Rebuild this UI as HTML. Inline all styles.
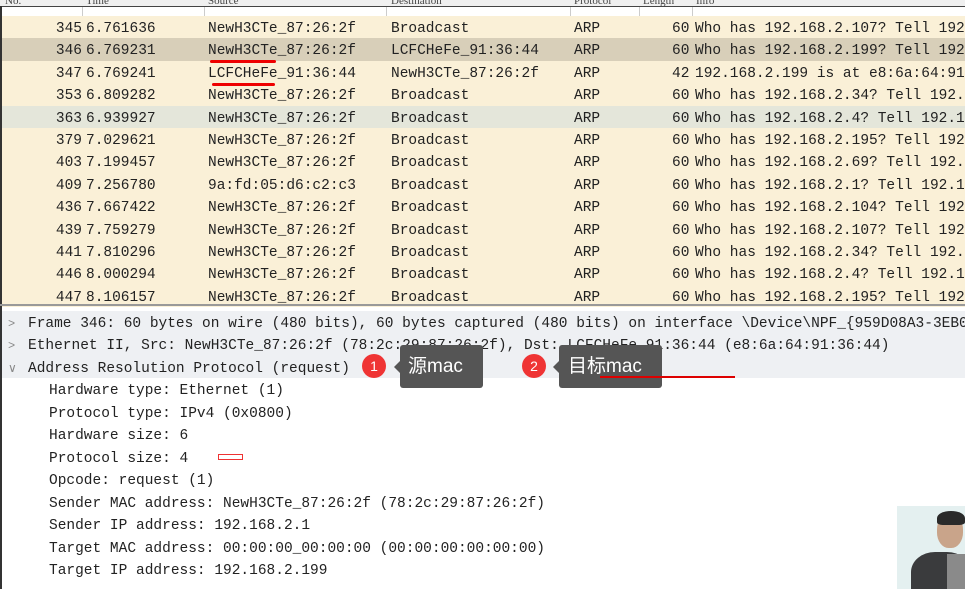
<!DOCTYPE html>
<html><head><meta charset="utf-8"><style>
body{margin:0;width:965px;height:589px;overflow:hidden;background:#fff;position:relative;font-family:"Liberation Mono",monospace;font-size:14.5px;color:#222}
.a{position:absolute;white-space:pre}
.row{position:absolute;left:2px;width:963px;height:22.4px;background:#faf0d7}
.row span{position:absolute;top:5px;white-space:pre}
.r{text-align:right}
.d{position:absolute;white-space:pre;left:28px}
.c{left:49px}
.arr{position:absolute;left:8px;color:#888;font-size:12px}
.h{position:absolute;top:-5px;font-family:'Liberation Serif',serif;font-size:11px;color:#444}
</style></head><body>
<div class="a" style="left:0;top:0;width:965px;height:6px;background:#f0f0f0"></div>
<div class="h" style="left:5px">No.</div>
<div class="h" style="left:86px">Time</div>
<div class="h" style="left:208px">Source</div>
<div class="h" style="left:391px">Destination</div>
<div class="h" style="left:574px">Protocol</div>
<div class="h" style="left:643px">Length</div>
<div class="h" style="left:696px">Info</div>
<div class="a" style="left:0;top:0;width:965px;height:6px;background:#f0f0f0;opacity:.0"></div>
<div class="a" style="left:0;top:6px;width:965px;height:1px;background:#444"></div>
<div class="a" style="left:0;top:6px;width:2px;height:583px;background:#333"></div>
<div class="a" style="left:82px;top:7px;width:1px;height:9px;background:#ccc"></div>
<div class="a" style="left:204px;top:7px;width:1px;height:9px;background:#ccc"></div>
<div class="a" style="left:386px;top:7px;width:1px;height:9px;background:#ccc"></div>
<div class="a" style="left:570px;top:7px;width:1px;height:9px;background:#ccc"></div>
<div class="a" style="left:639px;top:7px;width:1px;height:9px;background:#ccc"></div>
<div class="a" style="left:692px;top:7px;width:1px;height:9px;background:#ccc"></div>
<div id="rows"></div>
<div class="a" style="left:0;top:304px;width:965px;height:2px;background:#999"></div>
<div class="a" style="left:2px;top:311px;width:963px;height:67px;background:#eef0f3"></div>
<div class="arr" style="top:317px">&gt;</div>
<div class="arr" style="top:339px">&gt;</div>
<div class="arr" style="top:361px">&#8744;</div>
<div class="d" style="top:316px">Frame 346: 60 bytes on wire (480 bits), 60 bytes captured (480 bits) on interface \Device\NPF_{959D08A3-3EB0</div>
<div class="d" style="top:338px">Ethernet II, Src: NewH3CTe_87:26:2f (78:2c:29:87:26:2f), Dst: LCFCHeFe_91:36:44 (e8:6a:64:91:36:44)</div>
<div class="d" style="top:361px">Address Resolution Protocol (request)</div>
<div class="d c" style="top:383px">Hardware type: Ethernet (1)</div>
<div class="d c" style="top:406px">Protocol type: IPv4 (0x0800)</div>
<div class="d c" style="top:428px">Hardware size: 6</div>
<div class="d c" style="top:451px">Protocol size: 4</div>
<div class="d c" style="top:473px">Opcode: request (1)</div>
<div class="d c" style="top:496px">Sender MAC address: NewH3CTe_87:26:2f (78:2c:29:87:26:2f)</div>
<div class="d c" style="top:518px">Sender IP address: 192.168.2.1</div>
<div class="d c" style="top:541px">Target MAC address: 00:00:00_00:00:00 (00:00:00:00:00:00)</div>
<div class="d c" style="top:563px">Target IP address: 192.168.2.199</div>
<div class="a" style="left:210px;top:60px;width:66px;height:3px;background:#e00;border-radius:2px"></div>
<div class="a" style="left:212px;top:83px;width:63px;height:3px;background:#e00;border-radius:2px"></div>
<div class="a" style="left:218px;top:454px;width:23px;height:4px;border:1px solid #e33"></div>
<div class="a" style="left:362px;top:354px;width:24px;height:24px;border-radius:50%;background:#ef3434;color:#fff;font:14px 'Liberation Sans',sans-serif;text-align:center;line-height:24px">1</div>
<div class="a" style="left:522px;top:354px;width:24px;height:24px;border-radius:50%;background:#ef3434;color:#fff;font:14px 'Liberation Sans',sans-serif;text-align:center;line-height:24px">2</div>
<div class="a" style="left:394px;top:361px;width:0;height:0;border:6px solid transparent;border-right-color:#555;border-left:0"></div>
<div class="a" style="left:400px;top:345px;width:83px;height:43px;background:#555;border-radius:3px;color:#fff;font:19px 'Liberation Sans','Noto Sans CJK SC',sans-serif;line-height:43px;text-indent:8px">源mac</div>
<div class="a" style="left:553px;top:361px;width:0;height:0;border:6px solid transparent;border-right-color:#555;border-left:0"></div>
<div class="a" style="left:559px;top:345px;width:103px;height:43px;background:#555;border-radius:3px;color:#fff;font:19px 'Liberation Sans','Noto Sans CJK SC',sans-serif;line-height:43px;text-indent:9px">目标mac</div>
<div class="a" style="left:600px;top:376px;width:135px;height:2px;background:#d00"></div>
<div class="a" style="left:897px;top:506px;width:68px;height:83px;background:#e4f0f0;overflow:hidden">
<div class="a" style="left:40px;top:8px;width:26px;height:34px;border-radius:45%;background:#c9a48a"></div>
<div class="a" style="left:40px;top:5px;width:28px;height:14px;border-radius:50% 50% 20% 20%;background:#2a2a2a"></div>
<div class="a" style="left:14px;top:46px;width:60px;height:50px;border-radius:40% 40% 0 0;background:#3a3b3d"></div>
<div class="a" style="left:50px;top:48px;width:20px;height:40px;background:#8a8a8a"></div>
</div>
<script>
var d=[["345","6.761636","NewH3CTe_87:26:2f","Broadcast","60","Who has 192.168.2.107? Tell 192"],
["346","6.769231","NewH3CTe_87:26:2f","LCFCHeFe_91:36:44","60","Who has 192.168.2.199? Tell 192"],
["347","6.769241","LCFCHeFe_91:36:44","NewH3CTe_87:26:2f","42","192.168.2.199 is at e8:6a:64:91"],
["353","6.809282","NewH3CTe_87:26:2f","Broadcast","60","Who has 192.168.2.34? Tell 192."],
["363","6.939927","NewH3CTe_87:26:2f","Broadcast","60","Who has 192.168.2.4? Tell 192.1"],
["379","7.029621","NewH3CTe_87:26:2f","Broadcast","60","Who has 192.168.2.195? Tell 192"],
["403","7.199457","NewH3CTe_87:26:2f","Broadcast","60","Who has 192.168.2.69? Tell 192."],
["409","7.256780","9a:fd:05:d6:c2:c3","Broadcast","60","Who has 192.168.2.1? Tell 192.1"],
["436","7.667422","NewH3CTe_87:26:2f","Broadcast","60","Who has 192.168.2.104? Tell 192"],
["439","7.759279","NewH3CTe_87:26:2f","Broadcast","60","Who has 192.168.2.107? Tell 192"],
["441","7.810296","NewH3CTe_87:26:2f","Broadcast","60","Who has 192.168.2.34? Tell 192."],
["446","8.000294","NewH3CTe_87:26:2f","Broadcast","60","Who has 192.168.2.4? Tell 192.1"],
["447","8.106157","NewH3CTe_87:26:2f","Broadcast","60","Who has 192.168.2.195? Tell 192"]];
var h="";
d.forEach(function(r,i){var bg=i==1?"#d8cfb9":(i==4?"#e4e6da":"#faf0d7");
h+='<div class="row" style="top:'+(16+i*22.4)+'px;background:'+bg+'"><span class="r" style="right:'+(963-80)+'px">'+r[0]+'</span><span style="left:84px">'+r[1]+'</span><span style="left:206px">'+r[2]+'</span><span style="left:389px">'+r[3]+'</span><span style="left:572px">ARP</span><span style="left:670px">'+r[4]+'</span><span style="left:693px">'+r[5]+'</span></div>';});
document.getElementById("rows").innerHTML=h;
</script>
</body></html>
